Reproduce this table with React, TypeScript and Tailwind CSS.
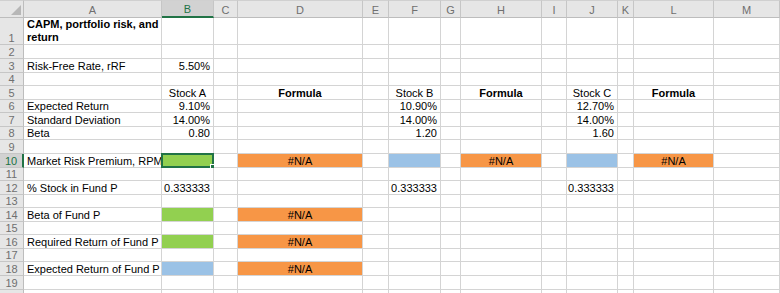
import React from 'react';

type Fill = 'green' | 'orange' | 'blue';

type CellData = {
  text?: React.ReactNode;
  align?: 'left' | 'center' | 'right';
  bold?: boolean;
  tall?: boolean;
  fill?: Fill;
  selected?: boolean;
};

const COLUMNS = ['A', 'B', 'C', 'D', 'E', 'F', 'G', 'H', 'I', 'J', 'K', 'L', 'M'];

const fillClass: Record<Fill, string> = {
  green: 'bg-[#92d050]',
  orange: 'bg-[#f79646]',
  blue: 'bg-[#9bc2e6]',
};

// sheet contents keyed by row number, then by column letter
const sheet: Record<number, Record<string, CellData>> = {
  1: {
    A: {
      text: (
        <>
          CAPM, portfolio risk, and
          <br />
          return
        </>
      ),
      bold: true,
      tall: true,
    },
  },
  3: { A: { text: 'Risk-Free Rate, rRF' }, B: { text: '5.50%', align: 'right' } },
  5: {
    B: { text: 'Stock A', align: 'center' },
    D: { text: 'Formula', align: 'center', bold: true },
    F: { text: 'Stock B', align: 'center' },
    H: { text: 'Formula', align: 'center', bold: true },
    J: { text: 'Stock C', align: 'center' },
    L: { text: 'Formula', align: 'center', bold: true },
  },
  6: {
    A: { text: 'Expected Return' },
    B: { text: '9.10%', align: 'right' },
    F: { text: '10.90%', align: 'right' },
    J: { text: '12.70%', align: 'right' },
  },
  7: {
    A: { text: 'Standard Deviation' },
    B: { text: '14.00%', align: 'right' },
    F: { text: '14.00%', align: 'right' },
    J: { text: '14.00%', align: 'right' },
  },
  8: {
    A: { text: 'Beta' },
    B: { text: '0.80', align: 'right' },
    F: { text: '1.20', align: 'right' },
    J: { text: '1.60', align: 'right' },
  },
  10: {
    A: { text: 'Market Risk Premium, RPM' },
    B: { fill: 'green', selected: true },
    D: { text: '#N/A', align: 'center', fill: 'orange' },
    F: { fill: 'blue' },
    H: { text: '#N/A', align: 'center', fill: 'orange' },
    J: { fill: 'blue' },
    L: { text: '#N/A', align: 'center', fill: 'orange' },
  },
  12: {
    A: { text: '% Stock in Fund P' },
    B: { text: '0.333333', align: 'right' },
    F: { text: '0.333333', align: 'right' },
    J: { text: '0.333333', align: 'right' },
  },
  14: {
    A: { text: 'Beta of Fund P' },
    B: { fill: 'green' },
    D: { text: '#N/A', align: 'center', fill: 'orange' },
  },
  16: {
    A: { text: 'Required Return of Fund P' },
    B: { fill: 'green' },
    D: { text: '#N/A', align: 'center', fill: 'orange' },
  },
  18: {
    A: { text: 'Expected Return of Fund P' },
    B: { fill: 'blue' },
    D: { text: '#N/A', align: 'center', fill: 'orange' },
  },
};

const ACTIVE_ROW = 10;
const ACTIVE_COL = 'B';
const LAST_LABELLED_ROW = 19;

function Cell({ data }: { data?: CellData }) {
  const align = data?.align ?? 'left';
  return (
    <div
      className={`relative flex min-w-0 items-end border-r border-b border-[#d4d4d4] px-[3px] ${
        data?.fill ? fillClass[data.fill] : 'bg-white'
      } ${align === 'right' ? 'justify-end' : align === 'center' ? 'justify-center' : 'justify-start'}`}
    >
      {data?.text && (
        <span
          className={`whitespace-nowrap ${data.tall ? 'leading-[13px]' : 'leading-[12px]'} ${
            data.bold ? 'font-bold' : ''
          }`}
        >
          {data.text}
        </span>
      )}
      {data?.selected && (
        <div className="absolute -top-[1px] -left-[1px] -right-[1px] -bottom-[1px] border-2 border-[#217346]">
          <div className="absolute -right-[4px] -bottom-[4px] h-[6px] w-[6px] border border-white bg-[#217346]" />
        </div>
      )}
    </div>
  );
}

export default function App() {
  const rows = Array.from({ length: 20 }, (_, i) => i + 1);

  return (
    <div className="h-[293px] w-[780px] overflow-hidden bg-white font-['Liberation_Sans',Arial,sans-serif] text-[11px] text-black">
      <div className="grid grid-cols-[24px_138px_52px_24px_125px_26px_52px_20px_81px_25px_51px_16px_80px_66px] grid-rows-[18px_27px_14px_14px_13px_14px_13px_14px_13px_14px_14px_13px_14px_13px_14px_13px_14px_13px_14px_14px_14px]">
        {/* corner */}
        <div className="relative border-t border-r border-b border-t-[#d0d0d0] border-r-[#bdbdbd] border-b-[#bdbdbd] bg-[#e6e6e6]">
          <svg className="absolute right-[2px] bottom-[2px]" width="10" height="10" viewBox="0 0 10 10">
            <polygon points="10,0 10,10 0,10" fill="#b7b7b7" />
          </svg>
        </div>

        {/* column letters */}
        {COLUMNS.map((col) => (
          <div
            key={col}
            className={`flex items-center justify-center border-t border-r border-t-[#d0d0d0] border-r-[#c6c6c6] pt-[2px] leading-none ${
              col === ACTIVE_COL
                ? 'border-b-2 border-b-[#217346] bg-[#d2d2d2] text-[#217346]'
                : 'border-b border-b-[#bdbdbd] bg-[#e6e6e6] text-[#6f6f6f]'
            }`}
          >
            {col}
          </div>
        ))}

        {rows.map((r) => (
          <React.Fragment key={r}>
            <div
              className={`flex items-end justify-center border-b border-[#c6c6c6] leading-[12px] ${
                r === ACTIVE_ROW
                  ? 'border-r-2 border-r-[#217346] bg-[#d2d2d2] text-[#217346]'
                  : 'border-r border-r-[#bdbdbd] bg-[#e6e6e6] text-[#6f6f6f]'
              }`}
            >
              {r <= LAST_LABELLED_ROW ? r : null}
            </div>
            {COLUMNS.map((col) => (
              <Cell key={col} data={sheet[r]?.[col]} />
            ))}
          </React.Fragment>
        ))}
      </div>
    </div>
  );
}
